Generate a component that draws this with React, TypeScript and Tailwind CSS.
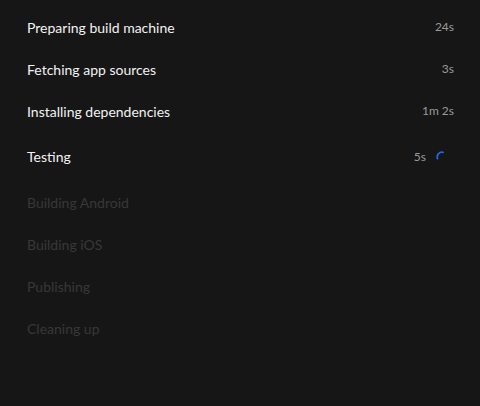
import React from "react";

const done = [
  { name: "Preparing build machine", time: "24s" },
  { name: "Fetching app sources", time: "3s" },
  { name: "Installing dependencies", time: "1m 2s" },
];
const pending = ["Building Android", "Building iOS", "Publishing", "Cleaning up"];

export default function App() {
  return (
    <div
      className="w-[480px] h-[406px] bg-[#161616] pt-[6px] pl-[27px] pr-[26px]"
      style={{ fontFamily: "Lato, 'Noto Sans', sans-serif" }}
    >
      {done.map((s) => (
        <div key={s.name} className="h-[42px] flex items-center justify-between">
          <span className="text-[14px] text-[#f2f2f2]">{s.name}</span>
          <span className="text-[12px] text-[#9a9a9a]">{s.time}</span>
        </div>
      ))}
      <div className="h-[49px] flex items-center justify-between">
        <span className="text-[14px] text-[#f2f2f2]">Testing</span>
        <div className="flex items-center gap-[10px] mr-[6px]">
          <span className="text-[12px] text-[#9a9a9a]">5s</span>
          <svg width="12" height="12" viewBox="0 0 12 12" className="mt-[1px]">
            <path
              d="M7 1.3 A4.8 4.8 0 0 0 1.5 7.6"
              fill="none"
              stroke="#2563eb"
              strokeWidth="1.8"
              strokeLinecap="round"
            />
          </svg>
        </div>
      </div>
      {pending.map((p) => (
        <div key={p} className="h-[42px] flex items-center">
          <span className="text-[14px] text-[#383838]">{p}</span>
        </div>
      ))}
    </div>
  );
}
